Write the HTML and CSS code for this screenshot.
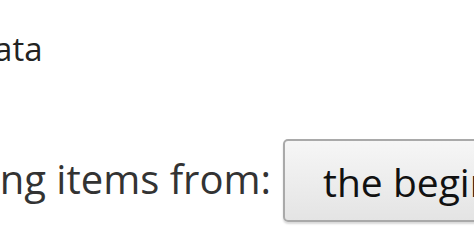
FILE: index.html
```html
<!DOCTYPE html>
<html>
<head>
<meta charset="utf-8">
<link rel="stylesheet" href="styles.css">
</head>
<body>
<div class="page">
  <h1 class="title">Clear browsing data</h1>
  <div class="row">
    <span class="label">Obliterate the following items from:</span>
    <div class="select">the beginning of time</div>
  </div>
</div>
</body>
</html>
```
FILE: styles.css
```css
html, body {
  margin: 0;
  padding: 0;
  background: #ffffff;
  overflow: hidden;
  width: 474px;
  height: 248px;
}
.page {
  width: 1200px;
  font-family: "Open Sans", "Noto Sans", sans-serif;
}
.title {
  margin: 0 0 0 -264px;
  padding-top: 21px;
  font-size: 33px;
  font-weight: normal;
  line-height: 56px;
  color: #222222;
}
.row {
  display: flex;
  align-items: center;
  margin-top: 62px;
  margin-left: -393px;
  gap: 12px;
}
.label {
  font-size: 40px;
  line-height: 53px;
  margin-bottom: 5px;
  color: #333333;
}
.select {
  box-sizing: border-box;
  height: 83px;
  padding: 2px 38px 0;
  font-size: 39px;
  line-height: 77px;
  color: #111111;
  border: 2px solid #a9a9a9;
  border-radius: 5px;
  background: linear-gradient(#f6f6f6, #e4e4e4);
  box-shadow: 0 2px 2px rgba(0,0,0,0.15);
  white-space: nowrap;
}
```
